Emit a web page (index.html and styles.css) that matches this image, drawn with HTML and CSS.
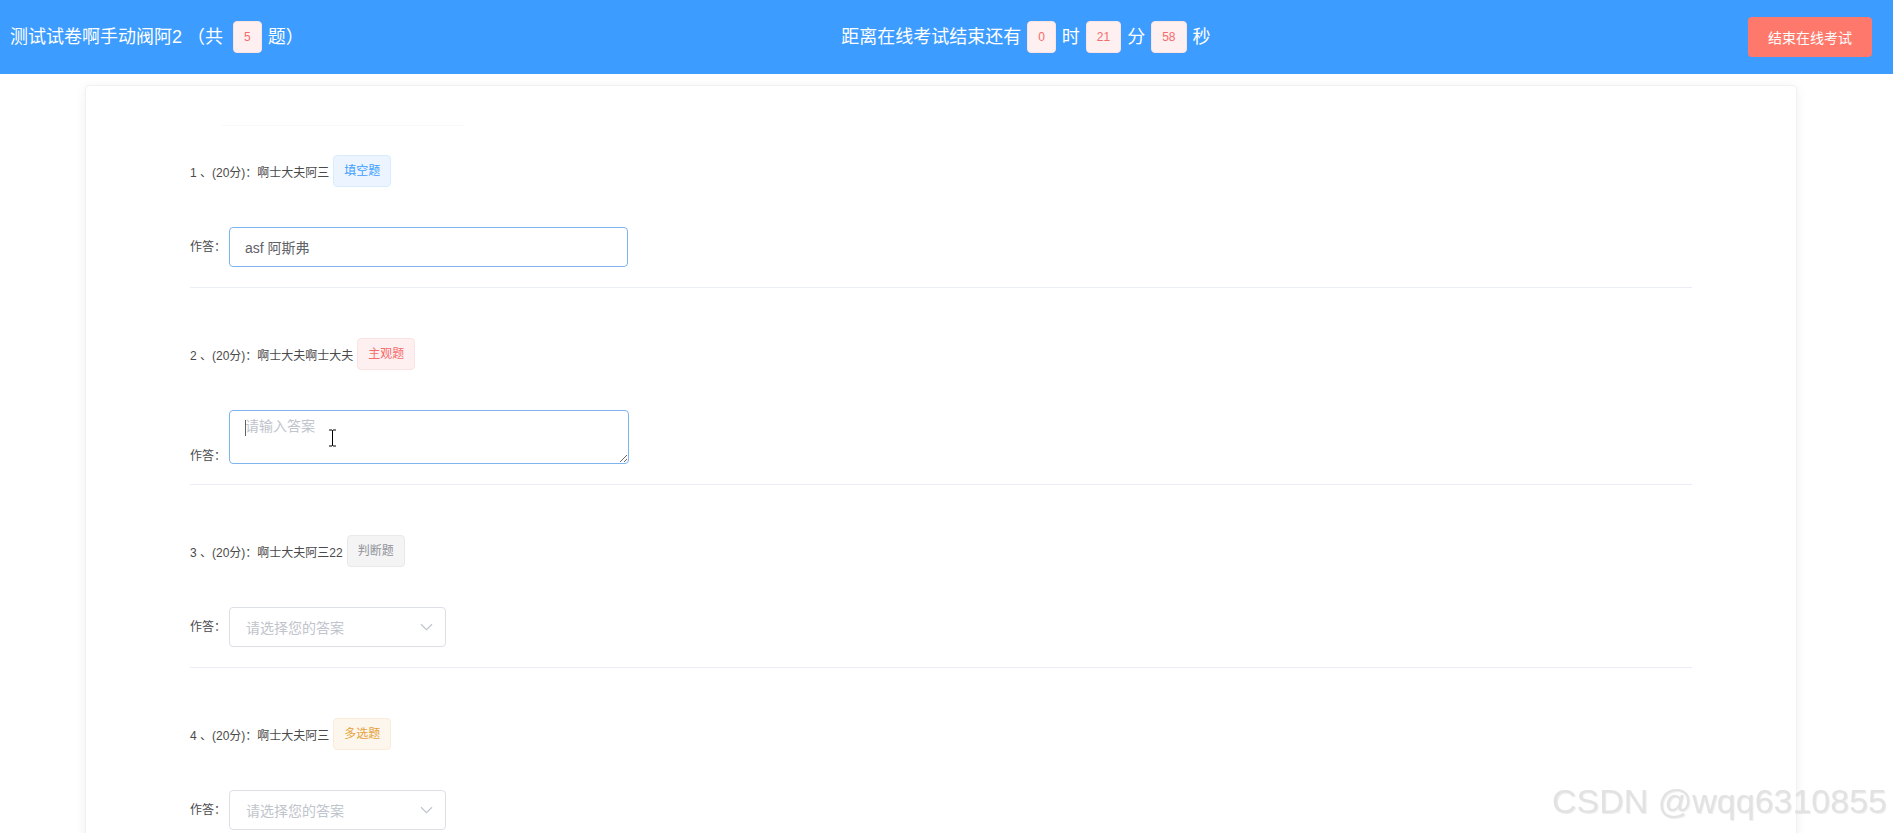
FILE: index.html
```html
<!DOCTYPE html>
<html lang="zh-CN">
<head>
  <meta charset="UTF-8">
  <meta name="viewport" content="width=device-width, initial-scale=1.0">
  <title>在线考试</title>
  <link rel="stylesheet" href="styles.css">
</head>
<body>

  <!-- Top bar: paper title, countdown, finish button -->
  <header class="exam-header">
    <div class="exam-title">
      <span>测试试卷啊手动阀阿2 （共</span>
      <span class="tag tag-danger">5</span>
      <span>题）</span>
    </div>

    <div class="exam-timer">
      <span>距离在线考试结束还有</span>
      <span class="tag tag-danger">0</span>
      <span>时</span>
      <span class="tag tag-danger">21</span>
      <span>分</span>
      <span class="tag tag-danger">58</span>
      <span>秒</span>
    </div>

    <button class="end-btn">结束在线考试</button>
  </header>

  <main class="exam-body">
    <div class="paper">
      <div class="paper-head"></div>

      <div class="question-list">
        <div class="question">
          <div class="question-title">
            <span>1 、(20分)：啊士大夫阿三</span>
            <span class="tag tag-primary">填空题</span>
          </div>
          <div class="answer">
            <span class="answer-label">作答：</span>
            <input class="answer-input" type="text" value="asf 阿斯弗">
          </div>
        </div>

        <div class="question">
          <div class="question-title">
            <span>2 、(20分)：啊士大夫啊士大夫</span>
            <span class="tag tag-danger">主观题</span>
          </div>
          <div class="answer answer-bottom">
            <span class="answer-label">作答：</span>
            <div class="textarea-wrap">
              <textarea class="answer-textarea" placeholder="请输入答案"></textarea>
              <span class="text-caret"></span>
              <svg class="mouse-cursor" width="9" height="18" viewBox="0 0 9 18">
                <path d="M1 1h3l0.5 0.6 0.5-0.6h3 M4.5 1.5v15 M1 17h3l0.5-0.6 0.5 0.6h3" fill="none" stroke="#fff" stroke-width="2.6"/>
                <path d="M1 1h3l0.5 0.6 0.5-0.6h3 M4.5 1.5v15 M1 17h3l0.5-0.6 0.5 0.6h3" fill="none" stroke="#000" stroke-width="1"/>
              </svg>
            </div>
          </div>
        </div>

        <div class="question">
          <div class="question-title">
            <span>3 、(20分)：啊士大夫阿三22</span>
            <span class="tag tag-info">判断题</span>
          </div>
          <div class="answer">
            <span class="answer-label">作答：</span>
            <div class="select">
              <span class="select-placeholder">请选择您的答案</span>
              <svg class="select-arrow" width="13" height="8" viewBox="0 0 13 8">
                <path d="M1 1.2l5.5 5.4 5.5-5.4" fill="none" stroke="#c0c4cc" stroke-width="1.2"/>
              </svg>
            </div>
          </div>
        </div>

        <div class="question">
          <div class="question-title">
            <span>4 、(20分)：啊士大夫阿三</span>
            <span class="tag tag-warning">多选题</span>
          </div>
          <div class="answer">
            <span class="answer-label">作答：</span>
            <div class="select">
              <span class="select-placeholder">请选择您的答案</span>
              <svg class="select-arrow" width="13" height="8" viewBox="0 0 13 8">
                <path d="M1 1.2l5.5 5.4 5.5-5.4" fill="none" stroke="#c0c4cc" stroke-width="1.2"/>
              </svg>
            </div>
          </div>
        </div>
      </div>
    </div>
  </main>

  <div class="watermark">CSDN @wqq6310855</div>

</body>
</html>
```

FILE: styles.css
```css
/* Reset and basic styles */
* {
  margin: 0;
  padding: 0;
  box-sizing: border-box;
}

html, body {
  height: 100%;
}

body {
  background: #fff;
  font-family: "Liberation Sans", "Noto Sans CJK SC", sans-serif;
  color: #333;
  overflow: hidden;
}

/* Header strip */
.exam-header {
  display: flex;
  justify-content: space-between;
  align-items: center;
  height: 74px;
  padding: 0 21px 0 10px;
  background-color: #3d9cff;
  color: #fff;
  font-size: 18px;
  line-height: 24px;
  white-space: nowrap;
}

.exam-title,
.exam-timer {
  display: flex;
  align-items: center;
}

.exam-header .tag {
  margin: 0 6px;
}

.exam-title .tag {
  margin: 0 6px 0 10px;
}

.end-btn {
  height: 40px;
  padding: 0 20px;
  border: none;
  border-radius: 4px;
  background-color: #fe796b;
  color: #fff;
  font-family: inherit;
  font-size: 14px;
  cursor: pointer;
}

/* Tags (element-like) */
.tag {
  display: inline-block;
  height: 32px;
  padding: 0 10px;
  line-height: 30px;
  font-size: 12px;
  border: 1px solid;
  border-radius: 4px;
  white-space: nowrap;
}

.tag-primary { background: #ecf5ff; border-color: #d9ecff; color: #409eff; }
.tag-danger  { background: #fef0f0; border-color: #fde2e2; color: #f56c6c; }
.tag-info    { background: #f4f4f5; border-color: #e9e9eb; color: #909399; }
.tag-warning { background: #fdf6ec; border-color: #faecd8; color: #e6a23c; }

/* Paper card */
.exam-body {
  height: calc(100vh - 74px);
  overflow: hidden;
}

.paper {
  margin: 11px 96px 0 85px;
  padding: 20px 104px 0;
  background: #fff;
  border: 1px solid #f0f1f3;
  border-radius: 4px;
  box-shadow: 0 2px 12px 0 rgba(0, 0, 0, 0.06);
}

.paper-head {
  width: 242px;
  height: 1px;
  margin: 19px 0 0 32px;
  background: #f9f9fa;
}

/* Questions */
.question {
  padding: 50px 0 20px;
  border-bottom: 1px solid #ebeef5;
}

.question:first-child {
  padding-top: 29px;
}

.question-title {
  display: flex;
  align-items: center;
  height: 32px;
  font-size: 12px;
  color: #4a4a4a;
}

.question-title .tag {
  margin-left: 4px;
}

.answer {
  display: flex;
  align-items: center;
  margin-top: 40px;
}

.answer-bottom {
  align-items: flex-end;
}

.answer-label {
  margin-right: 3px;
  font-size: 12px;
  line-height: 15px;
  color: #4a4a4a;
}

.answer-input {
  width: 399px;
  height: 40px;
  padding: 0 15px;
  border: 1px solid #80b4ee;
  border-radius: 4px;
  outline: none;
  font-family: inherit;
  font-size: 14px;
  color: #606266;
}

.textarea-wrap {
  position: relative;
  width: 400px;
  height: 54px;
}

.answer-textarea {
  display: block;
  width: 100%;
  height: 54px;
  padding: 5px 15px;
  border: 1px solid #80b4ee;
  border-radius: 4px;
  outline: none;
  resize: vertical;
  font-family: inherit;
  font-size: 14px;
  line-height: 1.5;
  color: #606266;
}

.answer-textarea::placeholder {
  color: #c0c4cc;
}

/* caret and mouse pointer over the focused textarea */
.text-caret {
  position: absolute;
  left: 16px;
  top: 10px;
  width: 1px;
  height: 16px;
  background: #606266;
}

.mouse-cursor {
  position: absolute;
  left: 99px;
  top: 19px;
}

.select {
  display: flex;
  align-items: center;
  justify-content: space-between;
  width: 217px;
  height: 40px;
  padding: 0 12px 0 16px;
  border: 1px solid #dcdfe6;
  border-radius: 4px;
  font-size: 14px;
}

.select-placeholder {
  color: #c0c4cc;
}

.watermark {
  position: fixed;
  right: 6px;
  bottom: 15px;
  font-family: "Liberation Sans", Arial, sans-serif;
  font-size: 34px;
  line-height: 34px;
  color: #e2e2e2;
  text-shadow: 1px 1px 1px rgba(0, 0, 0, 0.08);
  pointer-events: none;
}
```
